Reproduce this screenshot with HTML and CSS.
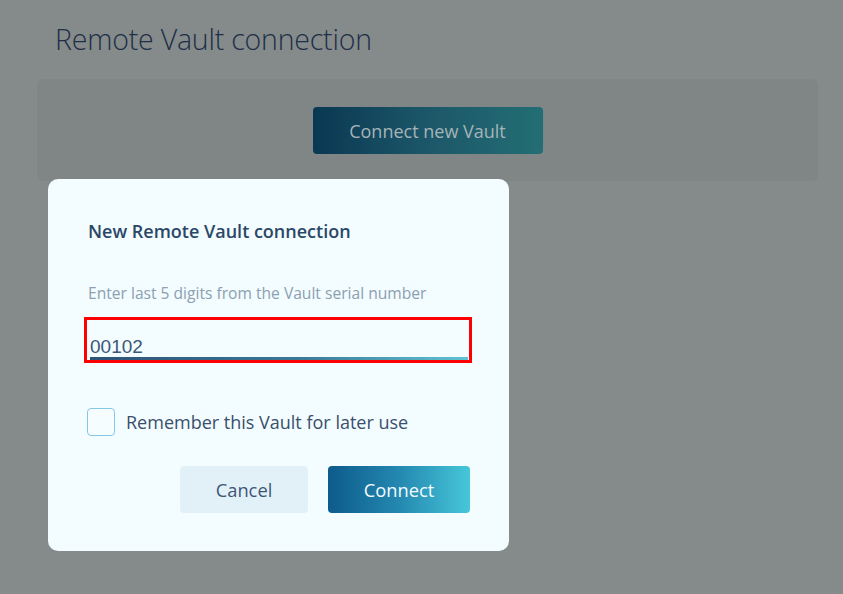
FILE: index.html
```html
<!DOCTYPE html>
<html>
<head>
<meta charset="utf-8">
<link rel="stylesheet" href="styles.css">
</head>
<body>
<main class="page">
  <h1 class="page-title">Remote Vault connection</h1>
  <section class="panel">
    <button class="btn-primary-dim">Connect new Vault</button>
  </section>
</main>
<div class="dialog">
  <h2 class="dialog-title">New Remote Vault connection</h2>
  <label class="field-label">Enter last 5 digits from the Vault serial number</label>
  <div class="field-highlight">
    <div class="field-value">00102</div>
    <div class="field-underline"></div>
  </div>
  <div class="check-row">
    <span class="checkbox"></span>
    <span class="check-label">Remember this Vault for later use</span>
  </div>
  <div class="actions">
    <button class="btn-cancel">Cancel</button>
    <button class="btn-connect">Connect</button>
  </div>
</div>
</body>
</html>
```
FILE: styles.css
```css
html, body {
  margin: 0;
  padding: 0;
  height: 100%;
}
body {
  background: #858a8a;
  font-family: "Open Sans", "Noto Sans", sans-serif;
  position: relative;
  overflow: hidden;
}
.page {
  padding: 19px 25px 0 37px;
}
.page-title {
  margin: 0 0 0 18px;
  font-weight: 300;
  font-size: 28.5px;
  line-height: 40px;
  color: #1e2f48;
  letter-spacing: -0.2px;
}
.panel {
  margin-top: 20px;
  height: 102px;
  background: #808686;
  border-radius: 6px;
  display: flex;
  justify-content: center;
  align-items: flex-start;
  padding-top: 28px;
  box-sizing: border-box;
}
.btn-primary-dim {
  width: 230px;
  height: 47px;
  border: none;
  border-radius: 4px;
  background: linear-gradient(90deg, #0a3852 0%, #1c5769 50%, #236e74 100%);
  color: #a6b4b8;
  font-family: inherit;
  font-size: 18px;
}
.dialog {
  position: absolute;
  left: 48px;
  top: 179px;
  width: 461px;
  height: 372px;
  box-sizing: border-box;
  background: #f3fcfe;
  border-radius: 10px;
  padding: 40px 37px 0 40px;
}
.dialog-title {
  margin: 0;
  font-size: 18px;
  font-weight: 600;
  color: #2b4766;
  line-height: 24px;
}
.field-label {
  display: block;
  margin-top: 40px;
  font-size: 15.6px;
  color: #8ba0b1;
  line-height: 20px;
}
.field-highlight {
  margin-top: 14px;
  margin-left: -4px;
  width: 388px;
  height: 46px;
  box-sizing: border-box;
  border: 3px solid #ff0000;
  padding: 16px 0 0 3px;
}
.field-value {
  font-family: "Liberation Sans", sans-serif;
  font-size: 19px;
  line-height: 21px;
  color: #3b5876;
}
.field-underline {
  height: 3px;
  margin-right: 1px;
  background: linear-gradient(90deg, #2d5275 0%, #3b7896 55%, #5ec3d3 100%);
}
.check-row {
  margin-top: 45px;
  display: flex;
  align-items: center;
  gap: 11px;
  margin-left: -1px;
}
.checkbox {
  width: 28px;
  height: 28px;
  box-sizing: border-box;
  border: 1.5px solid #85c7e6;
  border-radius: 4px;
  background: #f6fdff;
}
.check-label {
  font-size: 18px;
  color: #3a4f6d;
}
.actions {
  margin-top: 30px;
  display: flex;
  justify-content: flex-end;
  gap: 20px;
  margin-right: 2px;
}
.actions button {
  height: 47px;
  border: none;
  border-radius: 4px;
  font-family: inherit;
  font-size: 18.3px;
}
.btn-cancel {
  width: 128px;
  background: #e2f1f7;
  color: #3d5677;
}
.btn-connect {
  width: 142px;
  background: linear-gradient(90deg, #0d5b8b 0%, #2488b0 50%, #46c7d9 100%);
  color: #f2fbff;
}
```
